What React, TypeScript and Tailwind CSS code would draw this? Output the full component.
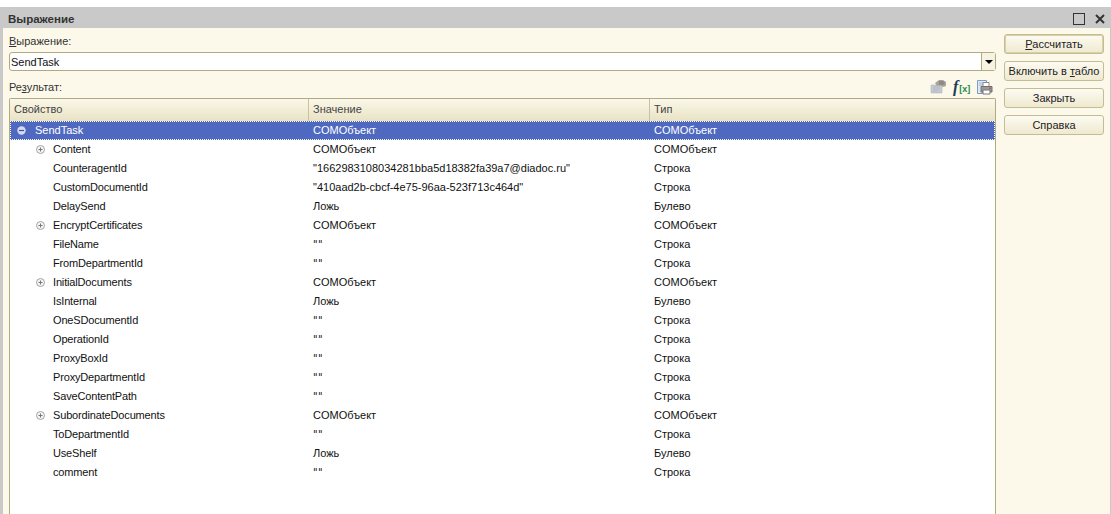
import React from 'react';

type Row = {
  name: string;
  value: string;
  type: string;
  expandable?: boolean;
};

const rows: Row[] = [
  { name: 'Content', value: 'COMОбъект', type: 'COMОбъект', expandable: true },
  { name: 'CounteragentId', value: '"1662983108034281bba5d18382fa39a7@diadoc.ru"', type: 'Строка' },
  { name: 'CustomDocumentId', value: '"410aad2b-cbcf-4e75-96aa-523f713c464d"', type: 'Строка' },
  { name: 'DelaySend', value: 'Ложь', type: 'Булево' },
  { name: 'EncryptCertificates', value: 'COMОбъект', type: 'COMОбъект', expandable: true },
  { name: 'FileName', value: '""', type: 'Строка' },
  { name: 'FromDepartmentId', value: '""', type: 'Строка' },
  { name: 'InitialDocuments', value: 'COMОбъект', type: 'COMОбъект', expandable: true },
  { name: 'IsInternal', value: 'Ложь', type: 'Булево' },
  { name: 'OneSDocumentId', value: '""', type: 'Строка' },
  { name: 'OperationId', value: '""', type: 'Строка' },
  { name: 'ProxyBoxId', value: '""', type: 'Строка' },
  { name: 'ProxyDepartmentId', value: '""', type: 'Строка' },
  { name: 'SaveContentPath', value: '""', type: 'Строка' },
  { name: 'SubordinateDocuments', value: 'COMОбъект', type: 'COMОбъект', expandable: true },
  { name: 'ToDepartmentId', value: '""', type: 'Строка' },
  { name: 'UseShelf', value: 'Ложь', type: 'Булево' },
  { name: 'comment', value: '""', type: 'Строка' },
];

const TreeToggle = ({ minus }: { minus?: boolean }) =>
  minus ? (
    <svg width="9" height="9" viewBox="0 0 9 9" className="shrink-0">
      <circle cx="4.5" cy="4.5" r="4.2" fill="#d5daf0" />
      <path d="M2 4.5h5" stroke="#3f5199" strokeWidth="1.2" />
    </svg>
  ) : (
    <svg width="9" height="9" viewBox="0 0 9 9" className="shrink-0">
      <circle cx="4.5" cy="4.5" r="4" fill="#f4f4f4" stroke="#a5a5a5" />
      <path d="M2.5 4.5h4M4.5 2.5v4" stroke="#777" />
    </svg>
  );

const ActionButton = ({ children, active }: { children: React.ReactNode; active?: boolean }) => (
  <button
    className={`h-5 w-[100px] rounded-[3px] border border-[#c2bd96] bg-gradient-to-b from-[#fdfbf1] to-[#efe9d0] text-center text-[11px] leading-[17px] text-[#222] ${
      active ? 'shadow-[inset_0_0_0_1px_#d9d1a3]' : ''
    }`}
  >
    {children}
  </button>
);

const Toolbar = () => (
  <div className="flex items-center">
    <svg width="17" height="15" viewBox="0 0 17 15">
      <path d="M1 6h11v8H1z" fill="#c3cbd2" stroke="#aeb6bd" strokeWidth="0.6" />
      <path d="M3 8h7M3 10h7M3 12h5" stroke="#aab3bb" strokeWidth="0.7" />
      <path d="M5 4l4-3h4l3 2v4l-3 1-3-2-3 1z" fill="#a8a29a" />
      <path d="M9 2h4l2 2-2 2H9z" fill="#8f8a84" />
    </svg>
    <span className="ml-[6px] flex w-[18px] items-baseline leading-none">
      <span className="font-['Liberation_Serif',serif] text-[16px] font-bold italic text-[#1d3a5c]">f</span>
      <span className="ml-px text-[9px] font-bold text-[#1f8a3c]">[x]</span>
    </span>
    <svg width="17" height="16" viewBox="0 0 17 16" className="ml-[5px]">
      <path d="M1.5 1.5h9v13h-9z" fill="#dfe9f5" stroke="#7d9cc4" />
      <path d="M3 4h6M3 6h6" stroke="#9db5d3" />
      <path d="M7 3.5h6v4H7z" fill="#fff" stroke="#8a8a8a" />
      <path d="M5 7.5h11v5.5H5z" fill="#9a9a9a" stroke="#6f6f6f" />
      <path d="M7 11h7v4H7z" fill="#fff" stroke="#777" />
      <circle cx="14" cy="9.2" r="0.8" fill="#d33" />
    </svg>
  </div>
);

const Cell = ({ children, className = '' }: { children: React.ReactNode; className?: string }) => (
  <div className={`truncate pl-[4px] ${className}`}>{children}</div>
);

export default function App() {
  return (
    <div className="flex h-[514px] w-[1111px] flex-col overflow-hidden bg-white font-['Liberation_Sans',Arial,sans-serif] text-[11px] text-[#111]">
      <div className="h-[7px]" />

      {/* Title bar */}
      <div className="flex h-[21px] shrink-0 items-center justify-between bg-[#c9c9c9] pl-[8px] pr-[6px]">
        <span className="pt-[4px] text-[11.5px] font-bold text-[#333]">Выражение</span>
        <div className="flex items-center gap-[10px] pt-[3px]">
          <span className="block h-[12px] w-[12px] border-[1.5px] border-[#333]" />
          <svg width="10" height="10" viewBox="0 0 10 10">
            <path d="M1 1l8 8M9 1l-8 8" stroke="#333" strokeWidth="2" />
          </svg>
        </div>
      </div>

      {/* Body */}
      <div className="flex min-h-0 flex-1 border-x-[3px] border-[#c9c9c9] border-r-[1px] bg-[#fcf9ea]">
        <div className="flex w-[993px] shrink-0 flex-col pl-[6px]">
          <div className="flex h-[24px] shrink-0 items-center pt-[2px] text-[#333]">
            <span>
              <span className="underline">В</span>ыражение:
            </span>
          </div>
          <div className="flex h-[19px] shrink-0 items-center justify-between rounded-[3px] border border-[#b0ab82] bg-white pl-[1px]">
            <span className="pt-px text-[11px] text-[#111]">SendTask</span>
            <span className="flex h-full w-[14px] items-center justify-center border-l border-[#b0ab82] bg-[#f6f3e2]">
              <span className="h-0 w-0 border-x-[4px] border-t-[4px] border-x-transparent border-t-black" />
            </span>
          </div>
          <div className="flex h-[27px] shrink-0 items-center justify-between pr-[3px] pt-[4px] text-[#333]">
            <span className="pt-[2px]">
              Ре<span className="underline">з</span>ультат:
            </span>
            <Toolbar />
          </div>

          {/* Table */}
          <div className="flex min-h-0 flex-1 flex-col rounded-t-[2px] border-x border-t border-[#b0ab82] bg-white">
            <div className="grid h-[22px] shrink-0 grid-cols-[299px_341px_1fr] bg-gradient-to-b from-[#fbf8ea] to-[#e9e2c4] leading-[20px] text-[#444]">
              <Cell className="border-r border-[#c7c2a0]">Свойство</Cell>
              <Cell className="border-r border-[#c7c2a0]">Значение</Cell>
              <Cell>Тип</Cell>
            </div>

            <div className="grid h-[19px] shrink-0 grid-cols-[298px_341px_1fr] items-center border border-dotted border-white bg-[#5069c0] text-white">
              <div className="flex items-center pl-[6px]">
                <TreeToggle minus />
                <span className="ml-[9px]">SendTask</span>
              </div>
              <Cell>COMОбъект</Cell>
              <Cell>COMОбъект</Cell>
            </div>

            {rows.map((row) => (
              <div key={row.name} className="grid h-[19px] shrink-0 grid-cols-[299px_341px_1fr] items-center">
                <div className="flex items-center pl-[26px]">
                  <span className="flex w-[17px] shrink-0 items-center">
                    {row.expandable && <TreeToggle />}
                  </span>
                  <span className="tracking-[-0.16px]">{row.name}</span>
                </div>
                <Cell className={row.value === '""' ? 'font-["DejaVu_Sans",sans-serif] text-[10px] tracking-[0.5px]' : ''}>
                  {row.value}
                </Cell>
                <Cell>{row.type}</Cell>
              </div>
            ))}
          </div>
        </div>

        {/* Buttons */}
        <div className="flex flex-col gap-[7px] pl-[8px] pt-[6px]">
          <ActionButton active>
            <span className="underline">Р</span>ассчитать
          </ActionButton>
          <ActionButton>
            Включить в <span className="underline">т</span>абло
          </ActionButton>
          <ActionButton>Закрыть</ActionButton>
          <ActionButton>Справка</ActionButton>
        </div>
      </div>
    </div>
  );
}
